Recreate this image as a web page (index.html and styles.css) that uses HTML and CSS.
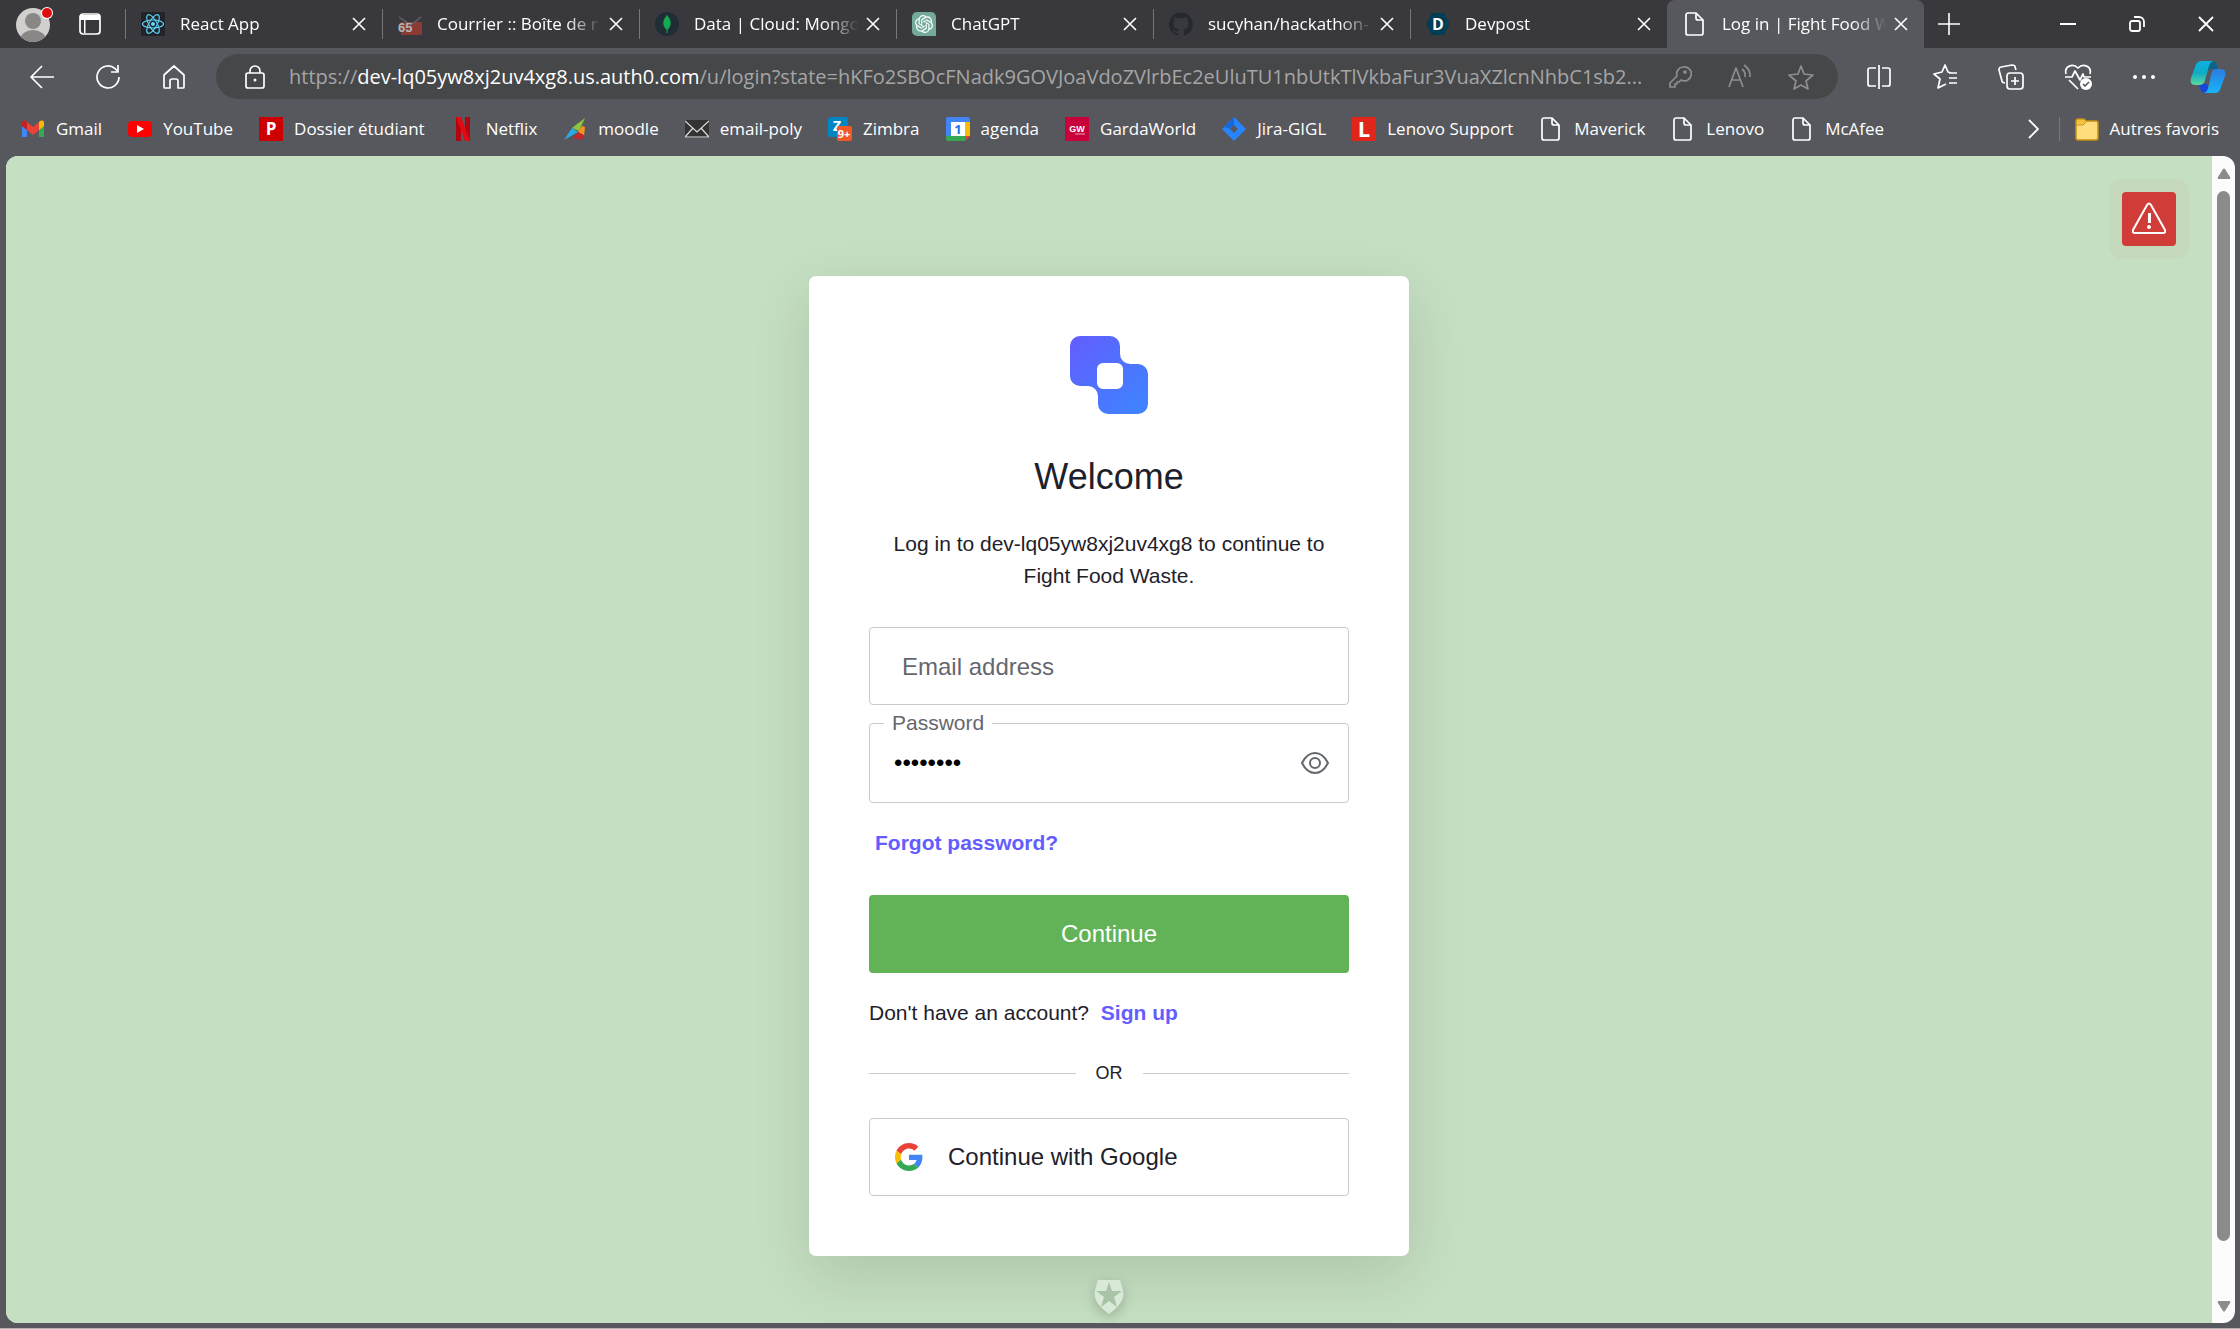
FILE: index.html
```html
<!DOCTYPE html>
<html lang="en">
<head>
    <meta charset="UTF-8">
    <meta name="viewport" content="width=device-width, initial-scale=1.0">
    <title>Log in | Fight Food Waste</title>
    <link rel="stylesheet" href="styles.css">
</head>
<body>
    <!-- Shared icons -->
    <svg class="sprite" aria-hidden="true">
        <symbol id="close" viewBox="0 0 14 14"><path d="M1 1l12 12M13 1L1 13" fill="none" stroke="#fff" stroke-width="1.6"/></symbol>
        <symbol id="page" viewBox="0 0 24 24"><path d="M5 1h8l7 7v13a2 2 0 0 1-2 2H5a2 2 0 0 1-2-2V3a2 2 0 0 1 2-2zM13 1v5a2 2 0 0 0 2 2h5" fill="none" stroke="#fff" stroke-width="1.7"/></symbol>
    </svg>

    <!-- Tabs -->
    <header class="tab-strip">
        <div class="profile">
            <button class="icon-btn" aria-label="Profile">
                <svg width="40" height="40" viewBox="0 0 40 40"><clipPath id="av"><circle cx="19" cy="21" r="17"/></clipPath><circle cx="19" cy="21" r="17" fill="#d2d0ce"/><g clip-path="url(#av)" fill="#8a8886"><circle cx="19" cy="17" r="8"/><ellipse cx="19" cy="36" rx="13" ry="10"/></g><circle cx="33" cy="9" r="6" fill="#fff"/><circle cx="33" cy="9" r="5" fill="#e00b0b"/></svg>
            </button>
            <button class="icon-btn" aria-label="Workspaces">
                <svg width="24" height="24" viewBox="0 0 24 24"><rect x="2" y="2" width="20" height="20" rx="3" fill="none" stroke="#fff" stroke-width="1.700"/><path d="M2 3h20v5H2zM6 7h1.500v14H6z" fill="#fff"/></svg>
            </button>
        </div>
        <div class="tab">
            <svg class="favicon" viewBox="0 0 24 24"><rect width="24" height="24" rx="2" fill="#20232a"/><g fill="none" stroke="#61dafb" stroke-width="1.1"><ellipse cx="12" cy="12" rx="10.500" ry="4"/><ellipse cx="12" cy="12" rx="10.500" ry="4" transform="rotate(60 12 12)"/><ellipse cx="12" cy="12" rx="10.500" ry="4" transform="rotate(120 12 12)"/></g><circle cx="12" cy="12" r="2" fill="#61dafb"/></svg>
            <span class="tab-title">React App</span>
            <button class="tab-close" aria-label="Close tab"><svg><use href="#close"/></svg></button>
        </div>
        <div class="tab">
            <svg class="favicon" viewBox="0 0 24 24"><rect x="3" y="10" width="21" height="13" rx="1" fill="#8c3a34"/><path d="M1 5l12 8L23 5" fill="none" stroke="#626266" stroke-width="1.500"/><text x="0" y="20" class="fav-65">65</text></svg>
            <span class="tab-title">Courrier :: Boîte de r</span>
            <button class="tab-close" aria-label="Close tab"><svg><use href="#close"/></svg></button>
        </div>
        <div class="tab">
            <svg class="favicon" viewBox="0 0 24 24"><circle cx="12" cy="12" r="12" fill="#1f2d36"/><path d="M12 3c5 6 5 11 0 15c-5-4-5-9 0-15z" fill="#13aa52"/><path d="M12 16v5" stroke="#13aa52" stroke-width="1"/></svg>
            <span class="tab-title">Data | Cloud: Mongo</span>
            <button class="tab-close" aria-label="Close tab"><svg><use href="#close"/></svg></button>
        </div>
        <div class="tab">
            <svg class="favicon" viewBox="0 0 24 24"><path d="M5 0h14a5 5 0 0 1 5 5v19H5a5 5 0 0 1-5-5V5a5 5 0 0 1 5-5z" fill="#74aa9c"/><path transform="translate(3 3) scale(.75)" fill="#fff" d="M22.2819 9.8211a5.9847 5.9847 0 0 0-.5157-4.9108 6.0462 6.0462 0 0 0-6.5098-2.9A6.0651 6.0651 0 0 0 4.9807 4.1818a5.9847 5.9847 0 0 0-3.9977 2.9 6.0462 6.0462 0 0 0 .7427 7.0966 5.98 5.98 0 0 0 .511 4.9107 6.051 6.051 0 0 0 6.5146 2.9001A5.9847 5.9847 0 0 0 13.2599 24a6.0557 6.0557 0 0 0 5.7718-4.2058 5.9894 5.9894 0 0 0 3.9977-2.9001 6.0557 6.0557 0 0 0-.7475-7.0729zm-9.022 12.6081a4.4755 4.4755 0 0 1-2.8764-1.0408l.1419-.0804 4.7783-2.7582a.7948.7948 0 0 0 .3927-.6813v-6.7369l2.02 1.1686a.071.071 0 0 1 .038.052v5.5826a4.504 4.504 0 0 1-4.4945 4.4944zm-9.6607-4.1254a4.4708 4.4708 0 0 1-.5346-3.0137l.142.0852 4.783 2.7582a.7712.7712 0 0 0 .7806 0l5.8428-3.3685v2.3324a.0804.0804 0 0 1-.0332.0615L9.74 19.9502a4.4992 4.4992 0 0 1-6.1408-1.6464zM2.3408 7.8956a4.485 4.485 0 0 1 2.3655-1.9728V11.6a.7664.7664 0 0 0 .3879.6765l5.8144 3.3543-2.0201 1.1685a.0757.0757 0 0 1-.071 0l-4.8303-2.7865A4.504 4.504 0 0 1 2.3408 7.872zm16.5963 3.8558L13.1038 8.364 15.1192 7.2a.0757.0757 0 0 1 .071 0l4.8303 2.7913a4.4944 4.4944 0 0 1-.6765 8.1042v-5.6772a.79.79 0 0 0-.407-.667zm2.0107-3.0231l-.142-.0852-4.7735-2.7818a.7759.7759 0 0 0-.7854 0L9.409 9.2297V6.8974a.0662.0662 0 0 1 .0284-.0615l4.8303-2.7866a4.4992 4.4992 0 0 1 6.6802 4.66zM8.3065 12.863l-2.02-1.1638a.0804.0804 0 0 1-.038-.0567V6.0742a4.4992 4.4992 0 0 1 7.3757-3.4537l-.142.0805L8.704 5.459a.7948.7948 0 0 0-.3927.6813zm1.0976-2.3654l2.602-1.4998 2.6069 1.4998v2.9994l-2.5974 1.4997-2.6067-1.4997Z"/></svg>
            <span class="tab-title">ChatGPT</span>
            <button class="tab-close" aria-label="Close tab"><svg><use href="#close"/></svg></button>
        </div>
        <div class="tab">
            <svg class="favicon" viewBox="0 0 24 24"><path fill="#24292e" d="M12 .3a12 12 0 0 0-3.800 23.400c.6.1.8-.3.8-.6v-2.100c-3.300.7-4-1.600-4-1.600-.6-1.400-1.400-1.800-1.400-1.800-1-.7.1-.7.1-.7 1.200 0 1.900 1.200 1.900 1.200 1 1.800 2.800 1.300 3.500 1 0-.8.4-1.300.7-1.600-2.700-.3-5.500-1.300-5.500-6 0-1.200.5-2.300 1.300-3.100-.2-.4-.6-1.600 0-3.200 0 0 1-.3 3.400 1.200a11.500 11.500 0 0 1 6 0c2.300-1.500 3.300-1.200 3.300-1.200.6 1.600.2 2.800 0 3.200.9.8 1.300 1.900 1.300 3.200 0 4.600-2.800 5.600-5.500 5.900.5.4.9 1 .9 2.200v3.300c0 .3.1.7.8.6A12 12 0 0 0 12 .3"/></svg>
            <span class="tab-title">sucyhan/hackathon-</span>
            <button class="tab-close" aria-label="Close tab"><svg><use href="#close"/></svg></button>
        </div>
        <div class="tab">
            <svg class="favicon" viewBox="0 0 24 24"><path d="M6 1h12l6 11-6 11H6L0 12z" fill="#003e54"/><text x="12" y="18" class="fav-d">D</text></svg>
            <span class="tab-title">Devpost</span>
            <button class="tab-close" aria-label="Close tab"><svg><use href="#close"/></svg></button>
        </div>
        <div class="tab active">
            <svg class="favicon"><use href="#page"/></svg>
            <span class="tab-title">Log in | Fight Food W</span>
            <button class="tab-close" aria-label="Close tab"><svg><use href="#close"/></svg></button>
        </div>
        <button class="new-tab" aria-label="New tab"><svg width="22" height="22" viewBox="0 0 22 22"><path d="M11 0v22M0 11h22" stroke="#fff" stroke-width="1.6"/></svg></button>
        <div class="window-buttons">
            <button aria-label="Minimize"><svg width="16" height="16" viewBox="0 0 16 16"><path d="M0 8h16" stroke="#fff" stroke-width="2"/></svg></button>
            <button aria-label="Restore"><svg width="16" height="16" viewBox="0 0 16 16"><rect x="1" y="5" width="10" height="10" rx="2" fill="none" stroke="#fff" stroke-width="1.800"/><path d="M5 1h5a5 5 0 0 1 5 5v5" fill="none" stroke="#fff" stroke-width="1.800"/></svg></button>
            <button aria-label="Close"><svg width="16" height="16" viewBox="0 0 16 16"><path d="M1 1l14 14M15 1L1 15" stroke="#fff" stroke-width="1.800"/></svg></button>
        </div>
    </header>

    <!-- Toolbar -->
    <nav class="toolbar">
        <button class="icon-btn" aria-label="Back"><svg width="26" height="26" viewBox="0 0 26 26"><path d="M25 13H2M13 2L2 13l11 11"/></svg></button>
        <button class="icon-btn" aria-label="Refresh"><svg width="26" height="26" viewBox="0 0 26 26"><path d="M24 13a11 11 0 1 1-4-8.500l3 3M23 1v7h-7"/></svg></button>
        <button class="icon-btn" aria-label="Home"><svg width="26" height="26" viewBox="0 0 26 26"><path d="M3 11L13 2l10 9v12a1 1 0 0 1-1 1h-5v-7a2 2 0 0 0-2-2h-4a2 2 0 0 0-2 2v7H4a1 1 0 0 1-1-1z"/></svg></button>
        <div class="address-bar">
            <svg width="22" height="26" viewBox="0 0 22 26"><rect x="2" y="9" width="18" height="15" rx="2"/><path d="M6 9V7a5 5 0 0 1 10 0v2"/><circle cx="11" cy="16" r="1.500" fill="#fff" stroke="none"/></svg>
            <div class="url">https://<span class="domain">dev-lq05yw8xj2uv4xg8.us.auth0.com</span>/u/login?state=hKFo2SBOcFNadk9GOVJoaVdoZVlrbEc2eUluTU1nbUtkTlVkbaFur3VuaXZlcnNhbC1sb2...</div>
            <div class="address-actions">
                <button class="icon-btn" aria-label="Passwords"><svg width="24" height="24" viewBox="0 0 24 24"><path d="M15 2a7 7 0 1 1-2 13l-2 2H9v2H7v3H2v-4l7-7a7 7 0 0 1 6-9z"/><circle cx="17" cy="7" r="1"/></svg></button>
                <button class="icon-btn" aria-label="Read aloud"><svg width="26" height="26" viewBox="0 0 26 26"><path d="M2 23L9 4l7 19M5 16h8M15 5q4 3 3 8M17 1q7 5 6 12"/></svg></button>
                <button class="icon-btn" aria-label="Add to favorites"><svg width="26" height="26" viewBox="0 0 26 26"><path d="M13 2l3 8 9 1-7 6 2 8-7-4-7 4 2-8-7-6 9-1z"/></svg></button>
            </div>
        </div>
        <div class="tools">
            <button class="icon-btn" aria-label="Split screen"><svg width="26" height="26" viewBox="0 0 26 26"><path d="M10 4H4a2 2 0 0 0-2 2v14a2 2 0 0 0 2 2h6M16 4h6a2 2 0 0 1 2 2v14a2 2 0 0 1-2 2h-6M13 1v24"/></svg></button>
            <button class="icon-btn" aria-label="Favorites"><svg width="26" height="26" viewBox="0 0 26 26"><path d="M17 9h8M17 14h8M17 19h8M19 9l-3-1-3-7-3 7-8 2 6 5-2 9 8-4"/></svg></button>
            <button class="icon-btn" aria-label="Collections"><svg width="26" height="26" viewBox="0 0 26 26"><rect x="9" y="9" width="16" height="16" rx="3"/><path d="M17 13v8M13 17h8M7 19c-2 0-3-1-3-2L1 6c0-2 1-3 2-3l11-2c2 0 3 0 3 2l1 3"/></svg></button>
            <button class="icon-btn" aria-label="Browser essentials"><svg width="28" height="28" viewBox="0 0 28 28"><path d="M2 11C0 3 9 0 14 5c5-5 14-2 12 6M1 14h7l3-6 5 9 3-6 1 3h7M5 17l9 9"/><circle cx="22" cy="21" r="6" fill="#fff" stroke="none"/><path d="M19 21l2 2 4-4" stroke="#57585d"/></svg></button>
            <button class="icon-btn" aria-label="More"><svg width="24" height="24" viewBox="0 0 24 24"><g fill="#fff" stroke="none"><circle cx="3" cy="12" r="2"/><circle cx="12" cy="12" r="2"/><circle cx="21" cy="12" r="2"/></g></svg></button>
            <button class="icon-btn copilot-btn" aria-label="Copilot">
                <svg class="copilot" width="36" height="34" viewBox="0 0 36 34">
                    <defs>
                        <linearGradient id="cp1" x1="0" y1="0" x2="0" y2="1"><stop offset="0" stop-color="#08b2e4"/><stop offset=".5" stop-color="#10abc5"/><stop offset="1" stop-color="#5dd99c"/></linearGradient>
                        <linearGradient id="cp2" x1="0" y1="0" x2="0" y2="1"><stop offset="0" stop-color="#2c7ce0"/><stop offset="1" stop-color="#16b5fa"/></linearGradient>
                    </defs>
                    <path d="M17 1h6c3 0 4 3 5 8h-7c-3 0-3 3-4 6z" fill="#0a6489"/>
                    <path d="M9 24h8l3 9h-5c-4 0-5-4-6-9z" fill="#1745d8"/>
                    <path d="M11 1h13c-4 0-5 4-6 9l-3 10c-1 4-3 5-6 5H5c-4 0-5-3-4-7L5 7c1-4 3-6 6-6z" fill="url(#cp1)"/>
                    <path d="M25 33H13c4 0 5-4 6-9l2-9c1-4 2-6 5-6h5c4 0 5 3 4 7l-4 11c-1 4-3 6-6 6z" fill="url(#cp2)"/>
                </svg>
            </button>
        </div>
    </nav>

    <!-- Bookmarks -->
    <nav class="bookmarks">
        <a href="#"><svg viewBox="0 0 24 24"><path d="M1 6v14h5V10z" fill="#4285f4"/><path d="M23 6v14h-5V10z" fill="#34a853"/><path d="M18 5v8l5-4V6c0-3-3-3-5-1z" fill="#fbbc04"/><path d="M6 5v8L1 9V6c0-3 3-3 5-1z" fill="#c5221f"/><path d="M6 5l6 5 6-5v8l-6 5-6-5z" fill="#ea4335"/></svg>Gmail</a>
        <a href="#"><svg viewBox="0 0 24 24"><rect y="4" width="24" height="16" rx="4" fill="#f00"/><path d="M9 8l7 4-7 4z" fill="#fff"/></svg>YouTube</a>
        <a href="#"><svg viewBox="0 0 24 24"><rect width="24" height="24" fill="#c00"/><text x="12" y="18" class="fav-p">P</text></svg>Dossier étudiant</a>
        <a href="#"><svg viewBox="0 0 24 24"><path d="M5 0h5v24H5zM14 0h5v24h-5z" fill="#b1060f"/><path d="M5 0h5l9 24h-5z" fill="#e50914"/></svg>Netflix</a>
        <a href="#"><svg viewBox="0 0 24 24"><path d="M22 1L9 11l7 3z" fill="#8cc63f"/><path d="M9 11l6 4L1 23z" fill="#29abe2"/><path d="M19 9l3 1-1 9-6-4z" fill="#f7931e"/><path d="M15 15l6 3-2 5-9-2z" fill="#c1272d"/></svg>moodle</a>
        <a href="#"><svg viewBox="0 0 24 24"><rect y="3" width="24" height="18" fill="#333"/><path d="M0 4l12 11L24 4M0 20l8-9M24 20l-8-9M0 20h24" fill="none" stroke="#ddd" stroke-width="1.200"/></svg>email-poly</a>
        <a href="#"><svg viewBox="0 0 24 24"><rect width="20" height="20" rx="3" fill="#0087c3"/><text x="9" y="14" class="fav-z">Z</text><rect x="9" y="9" width="15" height="15" rx="2" fill="#f05a28"/><text x="16" y="21" class="fav-9">9+</text></svg>Zimbra</a>
        <a href="#"><svg viewBox="0 0 24 24"><path d="M2 0h20a2 2 0 0 1 2 2v4H0V2a2 2 0 0 1 2-2z" fill="#4285f4"/><path d="M0 6h5v13H0z" fill="#4285f4"/><path d="M19 5h5v14h-5z" fill="#fbbc04"/><path d="M0 19h19v5H2a2 2 0 0 1-2-2z" fill="#34a853"/><path d="M19 19h5l-5 5z" fill="#ea4335"/><path d="M5 5h14v14H5z" fill="#fff"/><text x="12" y="17" class="fav-1">1</text></svg>agenda</a>
        <a href="#"><svg viewBox="0 0 24 24"><rect width="24" height="24" fill="#c8003c"/><text x="12" y="15" class="fav-gw">GW</text><path d="M10 17h10" stroke="#f0a0b4"/></svg>GardaWorld</a>
        <a href="#"><svg viewBox="0 0 24 24"><path d="M12 0l12 12-12 12L0 12z" fill="#2684ff"/><path d="M12 0v8l-4 4-6-2z" fill="#1868db"/><path d="M12 8l4 4-4 4-4-4z" fill="#57585d"/></svg>Jira-GIGL</a>
        <a href="#"><svg viewBox="0 0 24 24"><rect width="24" height="24" fill="#e1251b"/><text x="12" y="20" class="fav-l">L</text></svg>Lenovo Support</a>
        <a href="#"><svg><use href="#page"/></svg>Maverick</a>
        <a href="#"><svg><use href="#page"/></svg>Lenovo</a>
        <a href="#"><svg><use href="#page"/></svg>McAfee</a>
        <div class="bookmarks-end">
            <button class="icon-btn" aria-label="More bookmarks"><svg width="12" height="20" viewBox="0 0 12 20"><path d="M2 1l9 9-9 9" fill="none" stroke="#fff" stroke-width="1.800"/></svg></button>
            <a href="#" class="others"><svg viewBox="0 0 24 24"><path d="M1 4a2 2 0 0 1 2-2h6l2 2h10a2 2 0 0 1 2 2v15a2 2 0 0 1-2 2H3a2 2 0 0 1-2-2z" fill="#ffdc7c" stroke="#c48f10" stroke-width="1.500"/><path d="M2 4a1 1 0 0 1 1-1h6l2 2-3 2H2z" fill="#f5c23c"/><path d="M1 8h7l3-3" fill="none" stroke="#c48f10"/></svg>Autres favoris</a>
        </div>
    </nav>

    <!-- Page -->
    <div class="viewport">
        <main class="page">
            <button class="warning" aria-label="Warning">
                <svg width="34" height="34" viewBox="0 0 34 34"><path d="M15 3q2-3 4 0l14 25q1 3-2 3H3q-3 0-2-3z" fill="none" stroke="#fff" stroke-width="2"/><path d="M16 11h3v10h-3z" fill="#fff"/><circle cx="17" cy="25" r="2" fill="#fff"/></svg>
            </button>

            <section class="card">
                <svg class="logo" width="78" height="78" viewBox="0 0 78 78">
                    <defs><linearGradient id="logo-fill" x1="0" y1="0" x2="1" y2="1"><stop offset="0" stop-color="#635dff"/><stop offset="1" stop-color="#3c86ff"/></linearGradient></defs>
                    <path fill="url(#logo-fill)" fill-rule="evenodd" d="M10 0H40A10 10 0 0 1 50 10V18A10 10 0 0 0 60 28H68A10 10 0 0 1 78 38V68A10 10 0 0 1 68 78H38A10 10 0 0 1 28 68V60A10 10 0 0 0 18 50H10A10 10 0 0 1 0 40V10A10 10 0 0 1 10 0ZM33 27A6 6 0 0 0 27 33V47A6 6 0 0 0 33 53H47A6 6 0 0 0 53 47V33A6 6 0 0 0 47 27Z"/>
                </svg>
                <h1>Welcome</h1>
                <p class="intro">Log in to dev-lq05yw8xj2uv4xg8 to continue to Fight Food Waste.</p>

                <form>
                    <div class="field">
                        <input type="email" id="email">
                        <label for="email">Email address</label>
                    </div>
                    <div class="field filled">
                        <input type="password" id="password" value="password">
                        <label for="password">Password</label>
                        <button type="button" class="show-password" aria-label="Show password">
                            <svg width="28" height="22" viewBox="0 0 28 22"><path d="M1 11Q6 1 14 1t13 10Q22 21 14 21T1 11z"/><circle cx="14" cy="11" r="5"/></svg>
                        </button>
                    </div>
                    <a href="#" class="link forgot">Forgot password?</a>
                    <button type="submit" class="continue">Continue</button>
                </form>

                <p class="signup">Don't have an account? <a href="#" class="link">Sign up</a></p>
                <div class="divider">OR</div>
                <button class="google">
                    <svg width="28" height="28" viewBox="0 0 48 48"><path fill="#ea4335" d="M24 9.500c3.540 0 6.710 1.220 9.210 3.600l6.850-6.850C35.900 2.380 30.470 0 24 0 14.620 0 6.510 5.380 2.560 13.220l7.980 6.190C12.430 13.720 17.740 9.500 24 9.500z"/><path fill="#4285f4" d="M46.980 24.550c0-1.570-.15-3.090-.38-4.550H24v9.020h12.940c-.58 2.960-2.260 5.480-4.780 7.180l7.730 6c4.510-4.180 7.090-10.360 7.090-17.650z"/><path fill="#fbbc05" d="M10.530 28.590c-.48-1.450-.76-2.990-.76-4.590s.27-3.140.76-4.590l-7.980-6.190C.92 16.460 0 20.120 0 24c0 3.880.92 7.540 2.560 10.780l7.970-6.190z"/><path fill="#34a853" d="M24 48c6.480 0 11.930-2.130 15.890-5.810l-7.730-6c-2.150 1.450-4.920 2.300-8.160 2.300-6.260 0-11.570-4.220-13.470-9.910l-7.980 6.190C6.510 42.620 14.620 48 24 48z"/></svg>
                    Continue with Google
                </button>
            </section>

            <a href="#" class="badge" aria-label="Auth0">
                <svg width="30" height="34" viewBox="0 0 30 34"><path d="M4 0h22l3 10c2 9-3 16-14 24C4 26-1 19 1 10z" fill="#d9e9d7"/><path d="M15 2l3 9h10l-8 6 3 10-8-6-8 6 3-10-8-6h10z" fill="#a9c3a6"/></svg>
            </a>
        </main>

        <!-- Scrollbar -->
        <div class="scrollbar">
            <svg width="14" height="11" viewBox="0 0 14 11"><path d="M6 1q1-1 2 0l5 8q1 2-1 2H2q-2 0-1-2z" fill="#8b8b8b"/></svg>
            <div class="thumb"></div>
            <svg width="14" height="11" viewBox="0 0 14 11"><path d="M6 10q1 1 2 0l5-8q1-2-1-2H2Q0 0 1 2z" fill="#8b8b8b"/></svg>
        </div>
    </div>
</body>
</html>
```
FILE: styles.css
```css
* {
    box-sizing: border-box;
}

body {
    margin: 0;
    height: 100vh;
    display: flex;
    flex-direction: column;
    overflow: hidden;
    background-color: #57585d;
    border-bottom: 1px solid #b4b5b6;
    color: white;
    font-family: "Open Sans", "Noto Sans", sans-serif;
    font-size: 17px;
}

button {
    padding: 0;
    border: none;
    background: none;
    color: inherit;
    font: inherit;
    cursor: pointer;
}

svg {
    display: block;
    flex-shrink: 0;
}

.sprite {
    position: absolute;
    width: 0;
    height: 0;
}

/* Tabs */
.tab-strip {
    display: flex;
    height: 48px;
    background-color: #39393d;
}

.profile {
    display: flex;
    align-items: center;
    gap: 24px;
    width: 125px;
    padding-left: 14px;
}

.tab {
    display: flex;
    align-items: center;
    flex: 0 1 257px;
    min-width: 0;
    padding-right: 16px;
}

.tab::before {
    content: "";
    width: 1px;
    height: 30px;
    background-color: #77777a;
}

.tab.active {
    background-color: #57585d;
    border-radius: 8px 8px 0 0;
}

.tab.active::before {
    background: none;
}

.favicon {
    width: 24px;
    height: 24px;
    margin: 0 15px;
}

.tab-title {
    flex: 1;
    overflow: hidden;
    white-space: nowrap;
    line-height: 24px;
    mask-image: linear-gradient(to right, black 130px, transparent 165px);
}

.tab-close svg {
    width: 14px;
    height: 14px;
}

.new-tab {
    display: flex;
    align-items: center;
    padding: 0 14px;
}

.window-buttons {
    display: flex;
    margin-left: auto;
}

.window-buttons button {
    display: flex;
    align-items: center;
    justify-content: center;
    width: 69px;
}

/* Letters inside the favicons */
.fav-65 { font: bold 13px "Liberation Sans", sans-serif; fill: #b4b4b6; }
.fav-d { font: bold 16px "Open Sans", sans-serif; fill: white; text-anchor: middle; }
.fav-p { font: bold 17px "Open Sans", sans-serif; fill: white; text-anchor: middle; }
.fav-z { font: bold 14px "Open Sans", sans-serif; fill: white; text-anchor: middle; }
.fav-9 { font: bold 11px "Open Sans", sans-serif; fill: white; text-anchor: middle; }
.fav-1 { font: bold 13px "Open Sans", sans-serif; fill: #1a73e8; text-anchor: middle; }
.fav-gw { font: bold 9px "Liberation Sans", sans-serif; fill: white; text-anchor: middle; }
.fav-l { font: bold 22px "Open Sans", sans-serif; fill: white; text-anchor: middle; }

/* Toolbar */
.toolbar {
    display: flex;
    align-items: center;
    gap: 40px;
    height: 57px;
    padding: 0 14px 0 29px;
}

.toolbar svg:not(.copilot) {
    fill: none;
    stroke: white;
    stroke-width: 1.7;
    stroke-linejoin: round;
}

.address-bar {
    display: flex;
    align-items: center;
    flex: 1;
    gap: 23px;
    min-width: 0;
    height: 45px;
    margin-left: -11px;
    padding: 0 24px 0 28px;
    border-radius: 23px;
    background-color: #464749;
}

.url {
    flex: 1;
    overflow: hidden;
    white-space: nowrap;
    color: #a5a5a6;
    font-size: 20px;
}

.domain {
    color: white;
}

.address-actions,
.tools {
    display: flex;
    align-items: center;
    gap: 35px;
}

.address-bar .address-actions svg {
    stroke: #8e8e90;
}

.tools {
    gap: 40px;
    margin-left: -12px;
}

.copilot-btn {
    margin-left: -6px;
}

/* Bookmarks */
.bookmarks {
    display: flex;
    align-items: center;
    gap: 26px;
    height: 51px;
    padding: 0 21px 4px;
    white-space: nowrap;
}

.bookmarks a {
    display: flex;
    align-items: center;
    gap: 11px;
    color: white;
    text-decoration: none;
}

.bookmarks a svg {
    width: 24px;
    height: 24px;
}

.bookmarks-end {
    display: flex;
    align-items: center;
    gap: 20px;
    margin-left: auto;
}

.bookmarks .others {
    padding-left: 15px;
    border-left: 1px solid #77777a;
}

/* Page */
.viewport {
    display: flex;
    flex: 1;
    min-height: 0;
    margin: 0 5px 5px 6px;
    border-radius: 12px;
    overflow: hidden;
    background-color: #fcfcfc;
}

.page {
    position: relative;
    display: flex;
    flex-direction: column;
    align-items: center;
    flex: 1;
    padding-top: 120px;
    background-color: #c5dfc2;
    color: #1e212a;
    font-family: "Liberation Sans", Arial, sans-serif;
    font-size: 21px;
    line-height: 32px;
}

.warning {
    position: absolute;
    top: 36px;
    right: 36px;
    display: flex;
    align-items: center;
    justify-content: center;
    width: 54px;
    height: 54px;
    border-radius: 4px;
    background-color: #d03c38;
    box-shadow: 0 0 0 13px rgba(200, 180, 150, 0.12);
}

.card {
    display: flex;
    flex-direction: column;
    width: 600px;
    padding: 60px;
    border-radius: 7px;
    background-color: white;
    box-shadow: 0 18px 60px rgba(0, 0, 0, 0.12);
}

.logo {
    align-self: center;
}

h1 {
    margin: 36px 0 24px;
    font-size: 36px;
    font-weight: normal;
    line-height: 54px;
    text-align: center;
}

.intro {
    margin: 0 0 35px;
    padding: 0 20px;
    text-align: center;
}

.field {
    position: relative;
    display: flex;
    margin-bottom: 18px;
    border: 1px solid #c9cace;
    border-radius: 4px;
}

.field input {
    flex: 1;
    min-width: 0;
    height: 76px;
    padding: 0 24px;
    border: none;
    outline: none;
    background: none;
    font-family: inherit;
    font-size: 24px;
}

.field label {
    position: absolute;
    top: 23px;
    left: 32px;
    color: #65676e;
    font-size: 24px;
}

.field.filled input {
    height: 78px;
}

.field.filled label {
    top: -17px;
    left: 14px;
    padding: 0 8px;
    background-color: white;
    font-size: 21px;
}

.show-password {
    padding: 0 19px;
}

.show-password svg {
    fill: none;
    stroke: #65676e;
    stroke-width: 2;
}

.link {
    color: #635dff;
    font-weight: bold;
    text-decoration: none;
}

.forgot {
    display: inline-block;
    margin: 6px 6px 36px;
}

.continue {
    display: block;
    width: 100%;
    height: 78px;
    border-radius: 4px;
    background-color: #62b357;
    color: white;
    font-size: 24px;
}

.signup {
    margin: 24px 0;
}

.signup .link {
    margin-left: 6px;
}

.divider {
    display: flex;
    align-items: center;
    gap: 20px;
    margin: 4px 0 29px;
    font-size: 18px;
}

.divider::before,
.divider::after {
    content: "";
    flex: 1;
    height: 1px;
    background-color: #c9cace;
}

.google {
    display: flex;
    align-items: center;
    gap: 25px;
    height: 78px;
    padding: 0 25px;
    border: 1px solid #c9cace;
    border-radius: 4px;
    font-size: 24px;
}

.badge {
    margin-top: 24px;
    filter: drop-shadow(0 4px 6px rgba(0, 0, 0, 0.2));
}

/* Scrollbar */
.scrollbar {
    display: flex;
    flex-direction: column;
    align-items: center;
    gap: 12px;
    width: 23px;
    padding: 12px 0 11px;
}

.thumb {
    flex: 1;
    width: 13px;
    margin-bottom: 48px;
    border-radius: 7px;
    background-color: #8b8b8b;
}
```
